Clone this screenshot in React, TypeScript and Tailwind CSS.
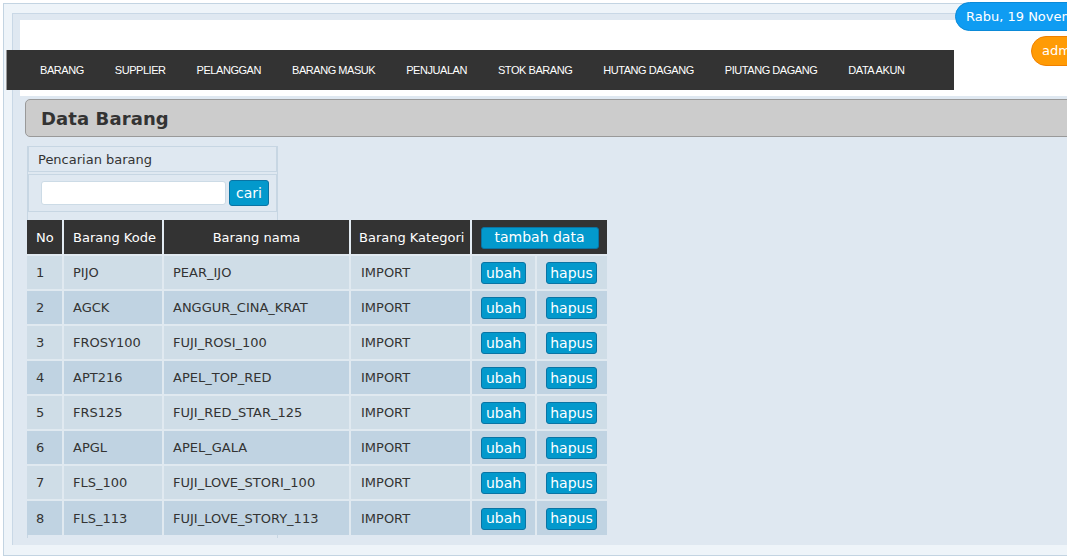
import React from 'react';

const NAV = [
  'BARANG',
  'SUPPLIER',
  'PELANGGAN',
  'BARANG MASUK',
  'PENJUALAN',
  'STOK BARANG',
  'HUTANG DAGANG',
  'PIUTANG DAGANG',
  'DATA AKUN',
];

const ROWS = [
  { no: 1, kode: 'PIJO', nama: 'PEAR_IJO', kat: 'IMPORT' },
  { no: 2, kode: 'AGCK', nama: 'ANGGUR_CINA_KRAT', kat: 'IMPORT' },
  { no: 3, kode: 'FROSY100', nama: 'FUJI_ROSI_100', kat: 'IMPORT' },
  { no: 4, kode: 'APT216', nama: 'APEL_TOP_RED', kat: 'IMPORT' },
  { no: 5, kode: 'FRS125', nama: 'FUJI_RED_STAR_125', kat: 'IMPORT' },
  { no: 6, kode: 'APGL', nama: 'APEL_GALA', kat: 'IMPORT' },
  { no: 7, kode: 'FLS_100', nama: 'FUJI_LOVE_STORI_100', kat: 'IMPORT' },
  { no: 8, kode: 'FLS_113', nama: 'FUJI_LOVE_STORY_113', kat: 'IMPORT' },
];

function BlueButton({ children, className = '' }: { children: React.ReactNode; className?: string }) {
  return (
    <button
      className={`bg-[#0399cc] border border-[#0a74a4] rounded-[3px] text-white text-[14px] leading-[19px] align-middle ${className}`}
    >
      {children}
    </button>
  );
}

export default function App() {
  return (
    <div
      className="relative w-[1067px] h-[560px] overflow-hidden bg-white text-[#333]"
      style={{ fontFamily: '"DejaVu Sans", Verdana, sans-serif' }}
    >
      {/* outer frame */}
      <div className="mt-[3px] ml-[3px] w-[1100px] h-[553px] border border-[#c3d4e2] bg-[#eef4f9] pt-[9px] pl-[8px] pb-[10px]">
        <div className="h-full border-t border-l border-[#c9d8e6] bg-[#dfe8f1] pt-[6px] pl-[7px]">
          {/* header */}
          <div className="h-[76px] bg-white pt-[30px]">
            <div className="-ml-[14px] w-[948px] h-[40px] bg-[#333] border-l border-[#999] flex items-center pl-[33px] gap-[31px]">
              {NAV.map((n) => (
                <span
                  key={n}
                  className="text-white text-[11px] tracking-[-0.45px]"
                  style={{ fontFamily: '"Liberation Sans", Arial, sans-serif' }}
                >
                  {n}
                </span>
              ))}
            </div>
          </div>

          {/* title bar */}
          <div className="mt-[3px] ml-[5px] h-[38px] bg-[#cccccc] border border-[#999] rounded-l-[5px] flex items-center pl-[15px]">
            <h1 className="text-[18px] font-bold text-[#333] tracking-[0.1px]">Data Barang</h1>
          </div>

          {/* content */}
          <div className="relative mt-[9px] ml-[7px]">
            <div className="w-[251px] h-[392px] border-l border-r border-[#c7d6e3]">
              <div className="h-[26px] border border-[#c7d6e3] flex items-center pl-[9px] text-[13px] pt-[1px]">
                Pencarian barang
              </div>
              <div className="mt-[2px] h-[38px] border border-[#c7d6e3] flex items-center pl-[12px] gap-[3px]">
                <input className="w-[185px] h-[24px] bg-white border border-[#ccdbe6] rounded-[3px]" />
                <BlueButton className="w-[40px] h-[26px]">cari</BlueButton>
              </div>
            </div>

            {/* table over the search frame */}
            <table className="absolute left-0 top-[74px] border-collapse text-[13px]">
              <thead>
                <tr className="h-[35px] bg-[#333] text-white">
                  <th className="w-[36px] font-normal text-left pl-[9px] pt-[2px] border-r-2 border-[#e3ebf2]">No</th>
                  <th className="w-[100px] font-normal text-left pl-[9px] pt-[2px] border-r-2 border-[#e3ebf2]">Barang Kode</th>
                  <th className="w-[187px] font-normal text-center pt-[2px] border-r-2 border-[#e3ebf2]">Barang nama</th>
                  <th className="w-[121px] font-normal text-left pl-[8px] pt-[2px] border-r-2 border-[#e3ebf2]">Barang Kategori</th>
                  <th colSpan={2} className="w-[136px] font-normal text-center">
                    <BlueButton className="w-[118px] h-[22px] mt-[1px]">tambah data</BlueButton>
                  </th>
                </tr>
              </thead>
              <tbody>
                {ROWS.map((r, i) => (
                  <tr
                    key={r.no}
                    className={`h-[35px] ${i % 2 === 0 ? 'bg-[#cfdde7]' : 'bg-[#c0d3e2]'}`}
                  >
                    <td className="pl-[9px] pt-[1px] border-t-2 border-r-2 border-[#e0e9f0]">{r.no}</td>
                    <td className="pl-[9px] pt-[1px] border-t-2 border-r-2 border-[#e0e9f0]">{r.kode}</td>
                    <td className="pl-[9px] pt-[1px] border-t-2 border-r-2 border-[#e0e9f0]">{r.nama}</td>
                    <td className="pl-[10px] pt-[1px] border-t-2 border-r-2 border-[#e0e9f0]">{r.kat}</td>
                    <td className="w-[65px] pl-[9px] pt-[1px] border-t-2 border-r-2 border-[#e0e9f0]">
                      <BlueButton className="w-[45px] h-[22px]">ubah</BlueButton>
                    </td>
                    <td className="w-[71px] pl-[9px] pt-[1px] border-t-2 border-[#e0e9f0]">
                      <BlueButton className="w-[51px] h-[22px]">hapus</BlueButton>
                    </td>
                  </tr>
                ))}
              </tbody>
            </table>
          </div>
        </div>
      </div>

      {/* badges at top right */}
      <div className="absolute left-[955px] top-[2px] h-[29px] w-[160px] rounded-full bg-[#0f9cf2] border border-[#0b8ad8] text-white text-[13px] flex items-center pl-[10px] whitespace-nowrap">
        Rabu, 19 November 2014
      </div>
      <div className="absolute left-[1031px] top-[36px] h-[30px] w-[80px] rounded-full bg-[#ff9b05] border border-[#f08000] text-white text-[13px] flex items-center pl-[10px] whitespace-nowrap">
        admin
      </div>
    </div>
  );
}
